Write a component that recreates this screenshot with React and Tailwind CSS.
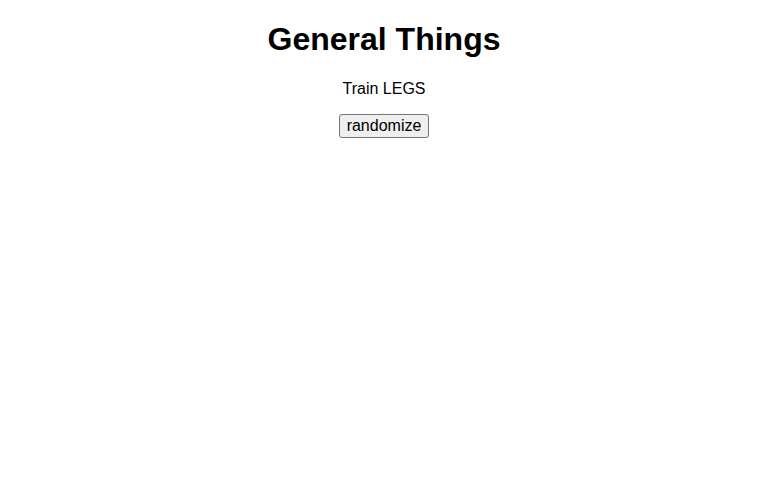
export default function App() {
  return (
    <div className="text-center text-black bg-white min-h-[480px]" style={{ fontFamily: '"Liberation Sans", Arial, sans-serif' }}>
      <div className="pt-[21.44px]">
        <h1 className="text-[32px] font-bold leading-[normal] mb-[21.44px]">General Things</h1>
        <p className="text-[16px] leading-[normal] mb-4">Train LEGS</p>
        <button
          type="button"
          className="text-[16px] leading-[normal] bg-[#efefef] border border-[#767676] rounded-[3px] px-[7px] py-[2px] text-black"
        >
          randomize
        </button>
      </div>
    </div>
  );
}
